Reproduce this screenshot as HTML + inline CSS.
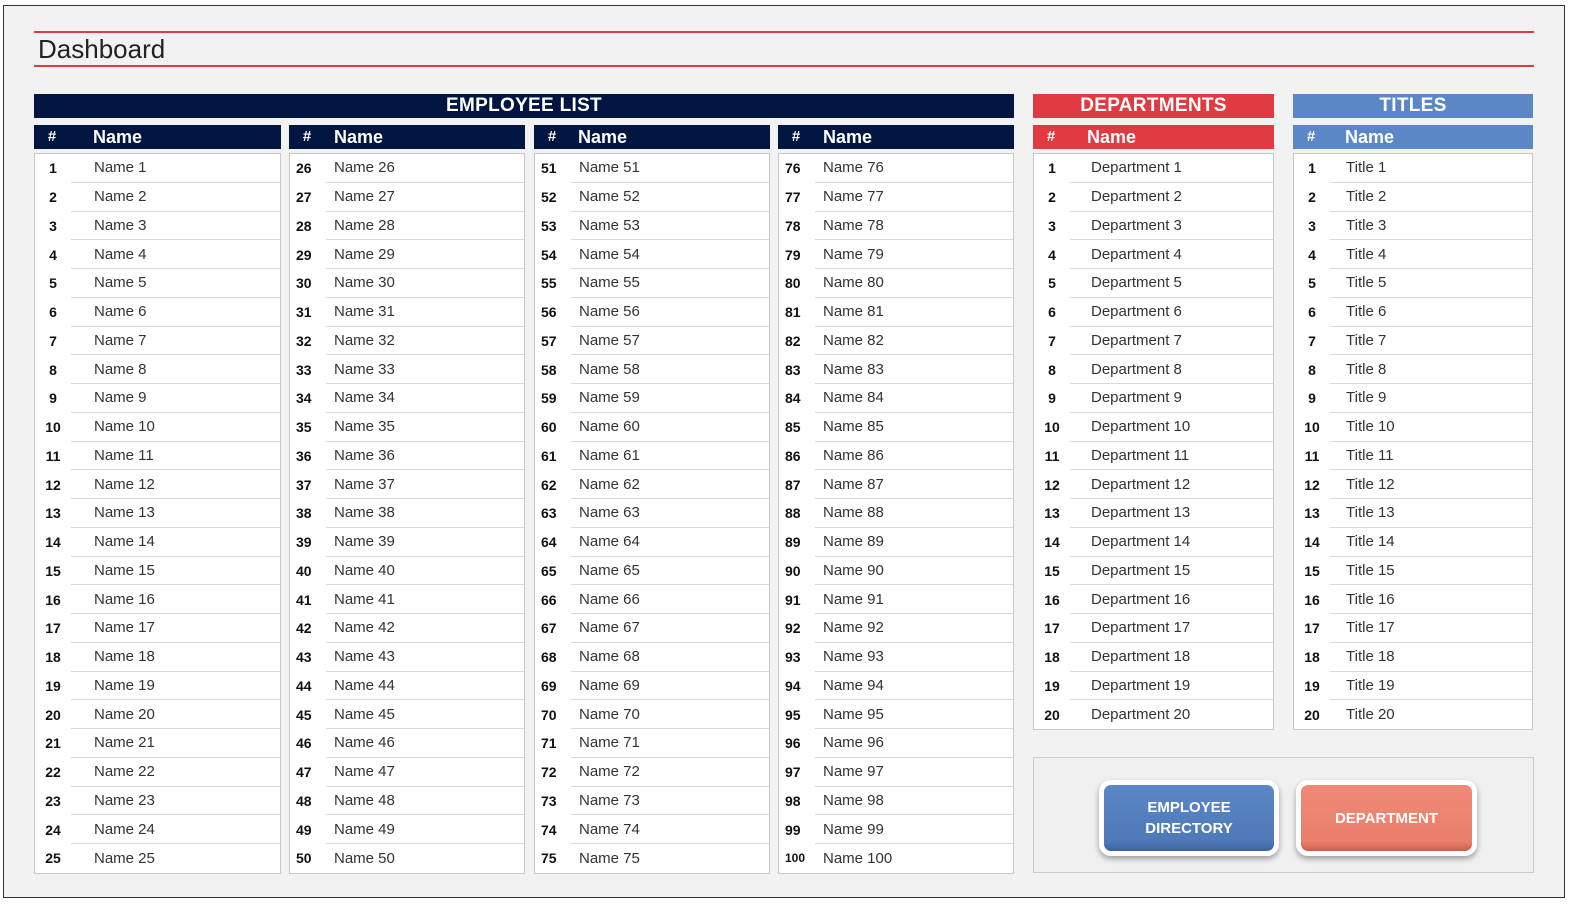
<!DOCTYPE html>
<html><head><meta charset="utf-8"><style>
*{margin:0;padding:0;box-sizing:border-box}
body{width:1588px;height:910px;background:#fff;font-family:"Liberation Sans","DejaVu Sans",sans-serif;position:relative;overflow:hidden}
.frame{position:absolute;left:3px;top:5px;width:1562px;height:893px;border:1px solid #333;background:#f2f2f2}
.rl{position:absolute;left:34px;width:1500px;height:2px;background:#e03a42}
.title{position:absolute;left:38px;top:34px;font-size:26px;color:#222}
.hd{position:absolute;height:24px;color:#fff;font-weight:bold;font-size:19px;text-align:center;line-height:24px;letter-spacing:0.3px}
.ch{position:absolute;top:125px;height:24px;color:#fff;font-weight:bold;font-size:18px;line-height:24px;display:flex}
.ch b{width:36px;text-align:center;font-size:15px}
.col{position:absolute;top:153px;background:#fff;border:1px solid #c8c8c8}
.r{height:28.76px;display:flex;align-items:center;font-size:15px;color:#333}
.r b{width:36px;flex:none;font-size:14px;color:#111;text-align:center}
.r span{flex:1;height:100%;display:flex;align-items:center;border-bottom:1px solid #d9d9d9}
.r:last-child span{border-bottom:none}
.l .r b{text-align:left;padding-left:6px}
.l .r span{padding-left:8px}
.c1 .r span{padding-left:23px}
.dp .r span{padding-left:21px}
.tt .r span{padding-left:16px}
.navy{background:#001641}.red{background:#e03a42}.blue{background:#5b87c6}
.panel{position:absolute;left:1033px;top:757px;width:501px;height:116px;border:1px solid #ccc;background:#f0f0f0}
.btn{position:absolute;top:780px;height:76px;border:5px solid #fff;border-radius:12px;box-shadow:0 3px 6px rgba(0,0,0,.35);color:#fff;font-weight:bold;font-size:15px;display:flex;align-items:center;justify-content:center;text-align:center;line-height:21px}
</style></head><body>
<div class="frame"></div>
<div class="rl" style="top:31px"></div>
<div class="title">Dashboard</div>
<div class="rl" style="top:65px"></div>

<div class="hd navy" style="left:34px;top:94px;width:980px">EMPLOYEE LIST</div>
<div class="hd red" style="left:1033px;top:94px;width:241px">DEPARTMENTS</div>
<div class="hd blue" style="left:1293px;top:94px;width:240px">TITLES</div>

<div class="ch navy" style="left:34px;width:247px"><b>#</b><span style="padding-left:23px">Name</span></div>
<div class="ch navy" style="left:289px;width:236px"><b>#</b><span style="padding-left:9px">Name</span></div>
<div class="ch navy" style="left:534px;width:236px"><b>#</b><span style="padding-left:8px">Name</span></div>
<div class="ch navy" style="left:778px;width:236px"><b>#</b><span style="padding-left:9px">Name</span></div>
<div class="ch red" style="left:1033px;width:241px"><b>#</b><span style="padding-left:18px">Name</span></div>
<div class="ch blue" style="left:1293px;width:240px"><b>#</b><span style="padding-left:16px">Name</span></div>

<div class="col c1" style="left:34px;width:247px">
<div class="r"><b>1</b><span>Name 1</span></div><div class="r"><b>2</b><span>Name 2</span></div><div class="r"><b>3</b><span>Name 3</span></div><div class="r"><b>4</b><span>Name 4</span></div><div class="r"><b>5</b><span>Name 5</span></div><div class="r"><b>6</b><span>Name 6</span></div><div class="r"><b>7</b><span>Name 7</span></div><div class="r"><b>8</b><span>Name 8</span></div><div class="r"><b>9</b><span>Name 9</span></div><div class="r"><b>10</b><span>Name 10</span></div><div class="r"><b>11</b><span>Name 11</span></div><div class="r"><b>12</b><span>Name 12</span></div><div class="r"><b>13</b><span>Name 13</span></div><div class="r"><b>14</b><span>Name 14</span></div><div class="r"><b>15</b><span>Name 15</span></div><div class="r"><b>16</b><span>Name 16</span></div><div class="r"><b>17</b><span>Name 17</span></div><div class="r"><b>18</b><span>Name 18</span></div><div class="r"><b>19</b><span>Name 19</span></div><div class="r"><b>20</b><span>Name 20</span></div><div class="r"><b>21</b><span>Name 21</span></div><div class="r"><b>22</b><span>Name 22</span></div><div class="r"><b>23</b><span>Name 23</span></div><div class="r"><b>24</b><span>Name 24</span></div><div class="r"><b>25</b><span>Name 25</span></div>
</div>
<div class="col l" style="left:289px;width:236px">
<div class="r"><b>26</b><span>Name 26</span></div><div class="r"><b>27</b><span>Name 27</span></div><div class="r"><b>28</b><span>Name 28</span></div><div class="r"><b>29</b><span>Name 29</span></div><div class="r"><b>30</b><span>Name 30</span></div><div class="r"><b>31</b><span>Name 31</span></div><div class="r"><b>32</b><span>Name 32</span></div><div class="r"><b>33</b><span>Name 33</span></div><div class="r"><b>34</b><span>Name 34</span></div><div class="r"><b>35</b><span>Name 35</span></div><div class="r"><b>36</b><span>Name 36</span></div><div class="r"><b>37</b><span>Name 37</span></div><div class="r"><b>38</b><span>Name 38</span></div><div class="r"><b>39</b><span>Name 39</span></div><div class="r"><b>40</b><span>Name 40</span></div><div class="r"><b>41</b><span>Name 41</span></div><div class="r"><b>42</b><span>Name 42</span></div><div class="r"><b>43</b><span>Name 43</span></div><div class="r"><b>44</b><span>Name 44</span></div><div class="r"><b>45</b><span>Name 45</span></div><div class="r"><b>46</b><span>Name 46</span></div><div class="r"><b>47</b><span>Name 47</span></div><div class="r"><b>48</b><span>Name 48</span></div><div class="r"><b>49</b><span>Name 49</span></div><div class="r"><b>50</b><span>Name 50</span></div>
</div>
<div class="col l" style="left:534px;width:236px">
<div class="r"><b>51</b><span>Name 51</span></div><div class="r"><b>52</b><span>Name 52</span></div><div class="r"><b>53</b><span>Name 53</span></div><div class="r"><b>54</b><span>Name 54</span></div><div class="r"><b>55</b><span>Name 55</span></div><div class="r"><b>56</b><span>Name 56</span></div><div class="r"><b>57</b><span>Name 57</span></div><div class="r"><b>58</b><span>Name 58</span></div><div class="r"><b>59</b><span>Name 59</span></div><div class="r"><b>60</b><span>Name 60</span></div><div class="r"><b>61</b><span>Name 61</span></div><div class="r"><b>62</b><span>Name 62</span></div><div class="r"><b>63</b><span>Name 63</span></div><div class="r"><b>64</b><span>Name 64</span></div><div class="r"><b>65</b><span>Name 65</span></div><div class="r"><b>66</b><span>Name 66</span></div><div class="r"><b>67</b><span>Name 67</span></div><div class="r"><b>68</b><span>Name 68</span></div><div class="r"><b>69</b><span>Name 69</span></div><div class="r"><b>70</b><span>Name 70</span></div><div class="r"><b>71</b><span>Name 71</span></div><div class="r"><b>72</b><span>Name 72</span></div><div class="r"><b>73</b><span>Name 73</span></div><div class="r"><b>74</b><span>Name 74</span></div><div class="r"><b>75</b><span>Name 75</span></div>
</div>
<div class="col l" style="left:778px;width:236px">
<div class="r"><b>76</b><span>Name 76</span></div><div class="r"><b>77</b><span>Name 77</span></div><div class="r"><b>78</b><span>Name 78</span></div><div class="r"><b>79</b><span>Name 79</span></div><div class="r"><b>80</b><span>Name 80</span></div><div class="r"><b>81</b><span>Name 81</span></div><div class="r"><b>82</b><span>Name 82</span></div><div class="r"><b>83</b><span>Name 83</span></div><div class="r"><b>84</b><span>Name 84</span></div><div class="r"><b>85</b><span>Name 85</span></div><div class="r"><b>86</b><span>Name 86</span></div><div class="r"><b>87</b><span>Name 87</span></div><div class="r"><b>88</b><span>Name 88</span></div><div class="r"><b>89</b><span>Name 89</span></div><div class="r"><b>90</b><span>Name 90</span></div><div class="r"><b>91</b><span>Name 91</span></div><div class="r"><b>92</b><span>Name 92</span></div><div class="r"><b>93</b><span>Name 93</span></div><div class="r"><b>94</b><span>Name 94</span></div><div class="r"><b>95</b><span>Name 95</span></div><div class="r"><b>96</b><span>Name 96</span></div><div class="r"><b>97</b><span>Name 97</span></div><div class="r"><b>98</b><span>Name 98</span></div><div class="r"><b>99</b><span>Name 99</span></div><div class="r"><b style="font-size:12px">100</b><span>Name 100</span></div>
</div>
<div class="col dp" style="left:1033px;width:241px">
<div class="r"><b>1</b><span>Department 1</span></div><div class="r"><b>2</b><span>Department 2</span></div><div class="r"><b>3</b><span>Department 3</span></div><div class="r"><b>4</b><span>Department 4</span></div><div class="r"><b>5</b><span>Department 5</span></div><div class="r"><b>6</b><span>Department 6</span></div><div class="r"><b>7</b><span>Department 7</span></div><div class="r"><b>8</b><span>Department 8</span></div><div class="r"><b>9</b><span>Department 9</span></div><div class="r"><b>10</b><span>Department 10</span></div><div class="r"><b>11</b><span>Department 11</span></div><div class="r"><b>12</b><span>Department 12</span></div><div class="r"><b>13</b><span>Department 13</span></div><div class="r"><b>14</b><span>Department 14</span></div><div class="r"><b>15</b><span>Department 15</span></div><div class="r"><b>16</b><span>Department 16</span></div><div class="r"><b>17</b><span>Department 17</span></div><div class="r"><b>18</b><span>Department 18</span></div><div class="r"><b>19</b><span>Department 19</span></div><div class="r"><b>20</b><span>Department 20</span></div>
</div>
<div class="col tt" style="left:1293px;width:240px">
<div class="r"><b>1</b><span>Title 1</span></div><div class="r"><b>2</b><span>Title 2</span></div><div class="r"><b>3</b><span>Title 3</span></div><div class="r"><b>4</b><span>Title 4</span></div><div class="r"><b>5</b><span>Title 5</span></div><div class="r"><b>6</b><span>Title 6</span></div><div class="r"><b>7</b><span>Title 7</span></div><div class="r"><b>8</b><span>Title 8</span></div><div class="r"><b>9</b><span>Title 9</span></div><div class="r"><b>10</b><span>Title 10</span></div><div class="r"><b>11</b><span>Title 11</span></div><div class="r"><b>12</b><span>Title 12</span></div><div class="r"><b>13</b><span>Title 13</span></div><div class="r"><b>14</b><span>Title 14</span></div><div class="r"><b>15</b><span>Title 15</span></div><div class="r"><b>16</b><span>Title 16</span></div><div class="r"><b>17</b><span>Title 17</span></div><div class="r"><b>18</b><span>Title 18</span></div><div class="r"><b>19</b><span>Title 19</span></div><div class="r"><b>20</b><span>Title 20</span></div>
</div>

<div class="panel"></div>
<div class="btn" style="left:1099px;width:180px;background:linear-gradient(#5b87c6,#4f79b8 85%,#3d639e)">EMPLOYEE<br>DIRECTORY</div>
<div class="btn" style="left:1296px;width:181px;background:linear-gradient(#ef8a76,#ea7f6b 85%,#c9604f)">DEPARTMENT</div>
</body></html>
